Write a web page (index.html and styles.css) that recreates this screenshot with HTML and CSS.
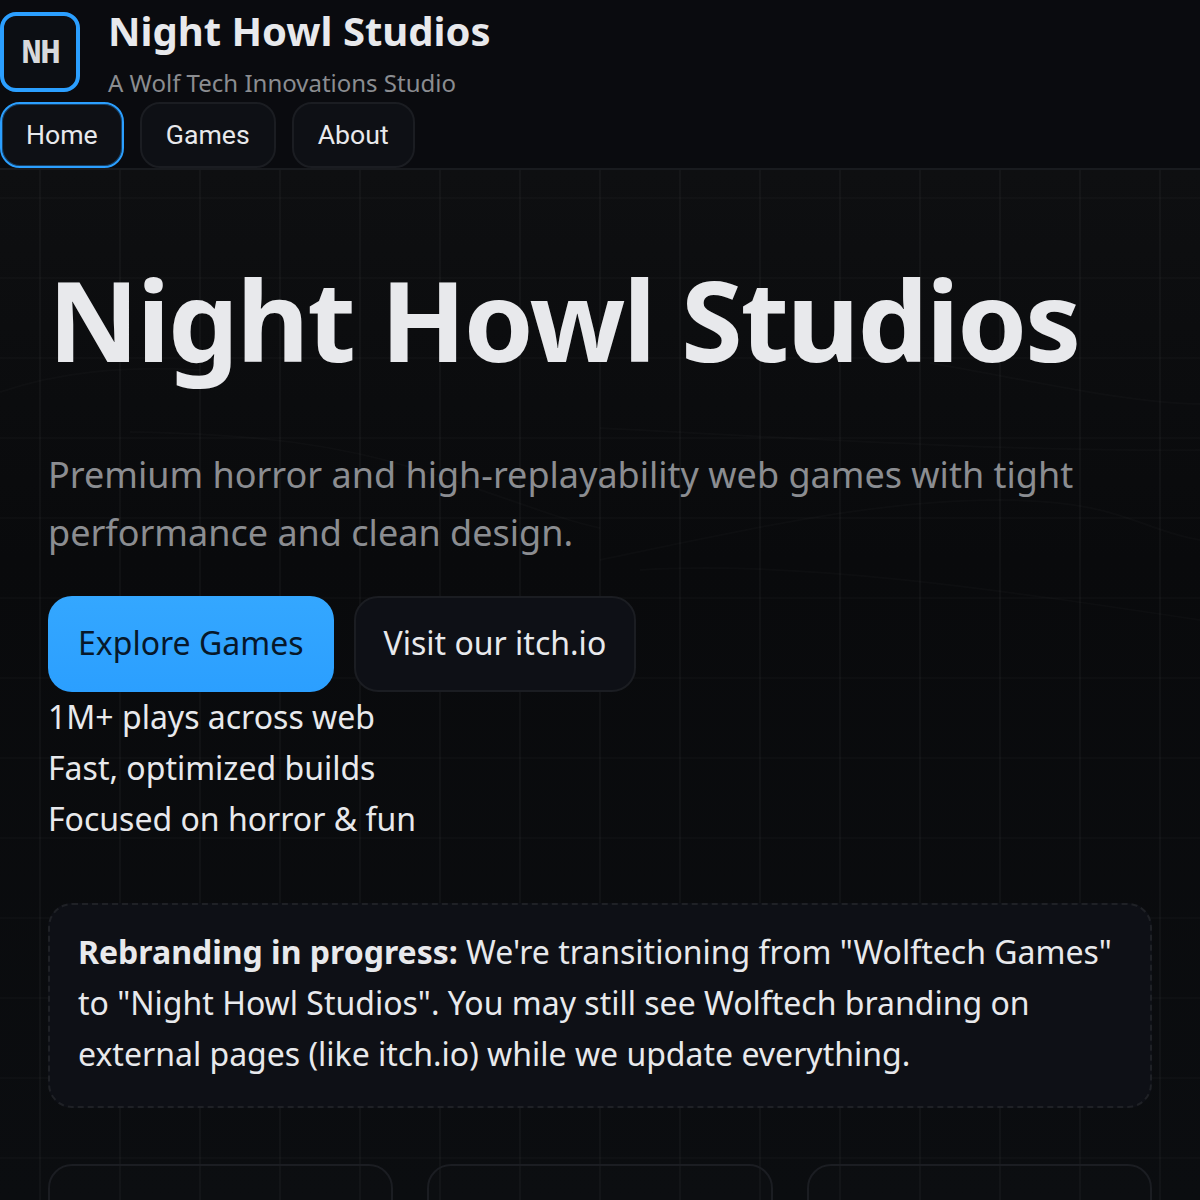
FILE: index.html
```html
<!DOCTYPE html>
<html lang="en">
<head>
    <meta charset="UTF-8">
    <meta name="viewport" content="width=device-width, initial-scale=1.0">
    <title>Night Howl Studios</title>
    <link rel="stylesheet" href="styles.css">
</head>
<body>
    <svg class="streaks" viewBox="0 0 1200 1200" aria-hidden="true">
        <path d="M0 392C60 372 120 366 200 370"/>
        <path d="M130 432C260 434 340 445 420 470S560 520 600 528"/>
        <path d="M600 428C760 436 1000 452 1200 450"/>
        <path d="M930 363C1030 380 1120 402 1200 404"/>
        <path d="M600 560C760 526 880 500 1000 500S1140 530 1200 540"/>
        <path d="M640 570C800 560 1000 590 1200 620"/>
    </svg>
    <header class="site-header">
        <div class="brand">
            <div class="logo">NH</div>
            <div class="brand-text">
                <div class="brand-name">Night Howl Studios</div>
                <div class="brand-sub">A Wolf Tech Innovations Studio</div>
            </div>
        </div>
        <nav class="nav">
            <a class="nav-link active" href="#">Home</a>
            <a class="nav-link" href="#">Games</a>
            <a class="nav-link" href="#">About</a>
        </nav>
    </header>
    <main class="content">
        <h1 class="hero-title">Night Howl Studios</h1>
        <p class="hero-lead">Premium horror and high-replayability web games with tight performance and clean design.</p>
        <div class="actions">
            <a class="btn btn-primary" href="#">Explore Games</a>
            <a class="btn" href="#">Visit our itch.io</a>
        </div>
        <ul class="facts">
            <li>1M+ plays across web</li>
            <li>Fast, optimized builds</li>
            <li>Focused on horror &amp; fun</li>
        </ul>
        <div class="notice"><strong>Rebranding in progress:</strong> We're transitioning from "Wolftech Games" to "Night Howl Studios". You may still see Wolftech branding on external pages (like itch.io) while we update everything.</div>
        <div class="cards">
            <div class="card"></div>
            <div class="card"></div>
            <div class="card"></div>
        </div>
    </main>
</body>
</html>
```

FILE: styles.css
```css
* {
    box-sizing: border-box;
}
html, body {
    height: 1200px;
    margin: 0;
    overflow: hidden;
}
body {
    position: relative;
    font-family: "Noto Sans", sans-serif;
    color: #e8e9ec;
    background-color: #0a0b0d;
    background-image:
        linear-gradient(to right, rgba(255,255,255,0.028) 2px, transparent 2px),
        linear-gradient(to bottom, rgba(255,255,255,0.016) 2px, transparent 2px),
        linear-gradient(to bottom, #0e0f11 170px, #090a0c 560px, #0b0d10 1200px);
    background-size: 80px 80px, 80px 80px, 100% 100%;
    background-position: 39px 37px, 39px 37px, 0 0;
}
.streaks {
    position: absolute;
    top: 0;
    left: 0;
    width: 1200px;
    height: 1200px;
    fill: none;
    stroke: rgba(255,255,255,0.02);
    stroke-width: 2;
}
.site-header {
    position: relative;
    height: 170px;
    padding-top: 12px;
    background: #0a0b0f;
    border-bottom: 2px solid #191b1f;
}
.brand {
    display: flex;
    gap: 28px;
    height: 80px;
}
.logo {
    width: 80px;
    height: 80px;
    padding-top: 3px;
    display: flex;
    align-items: center;
    justify-content: center;
    border: 4px solid #2b9fff;
    border-radius: 16px;
    background: #0c0e13;
    font-family: "Liberation Mono", monospace;
    font-size: 35px;
    font-weight: 700;
    letter-spacing: -2px;
    color: #d8d9dc;
}
.brand-text {
    margin-top: -7px;
}
.brand-name {
    font-size: 40px;
    font-weight: 700;
    line-height: 52px;
}
.brand-sub {
    margin-top: 10px;
    font-size: 24px;
    line-height: 32px;
    color: #8b8d91;
}
.nav {
    display: flex;
    gap: 16px;
    margin-top: 10px;
}
.nav-link {
    height: 66px;
    padding: 0 24px;
    display: flex;
    align-items: center;
    border: 2px solid #1b1d22;
    border-radius: 20px;
    background: #0e1015;
    color: #e8e9ec;
    font-family: Roboto, sans-serif;
    font-size: 26.67px;
    text-decoration: none;
}
.nav-link.active {
    border-color: #2b9fff;
    box-shadow: inset 0 0 0 1px rgba(43,159,255,0.35);
}
.content {
    position: relative;
    padding: 0 48px;
}
.hero-title {
    margin: 82px 0 0;
    font-size: 112px;
    font-weight: 700;
    line-height: 134px;
    letter-spacing: -2.24px;
    color: #e8e9ec;
}
.hero-lead {
    margin: 60px 0 0;
    max-width: 1060px;
    font-size: 36px;
    line-height: 58px;
    color: #8b8d91;
}
.actions {
    display: flex;
    gap: 20px;
    margin-top: 34px;
}
.btn {
    height: 96px;
    padding: 0 28px 4px;
    display: flex;
    align-items: center;
    border: 2px solid #1b1d22;
    border-radius: 24px;
    background: #0e1016;
    color: #e8e9ec;
    font-size: 32px;
    text-decoration: none;
}
.btn-primary {
    border: none;
    padding: 0 30px 4px;
    background: linear-gradient(#34a7ff, #2b9fff);
    color: #07182a;
}
.facts {
    list-style: none;
    margin: -1px 0 0;
    padding: 0;
    font-size: 32px;
    line-height: 51.2px;
}
.notice {
    margin-top: 58px;
    padding: 21px 28px 27px;
    border: 2px dashed #1f2126;
    border-radius: 24px;
    background: #0e1016;
    font-size: 32px;
    line-height: 51.2px;
}
.cards {
    display: grid;
    grid-template-columns: repeat(3, 1fr);
    gap: 34px;
    margin-top: 56px;
}
.card {
    height: 200px;
    border: 2px solid #1b1d22;
    border-radius: 24px;
    background: rgba(255,255,255,0.006);
}
```
